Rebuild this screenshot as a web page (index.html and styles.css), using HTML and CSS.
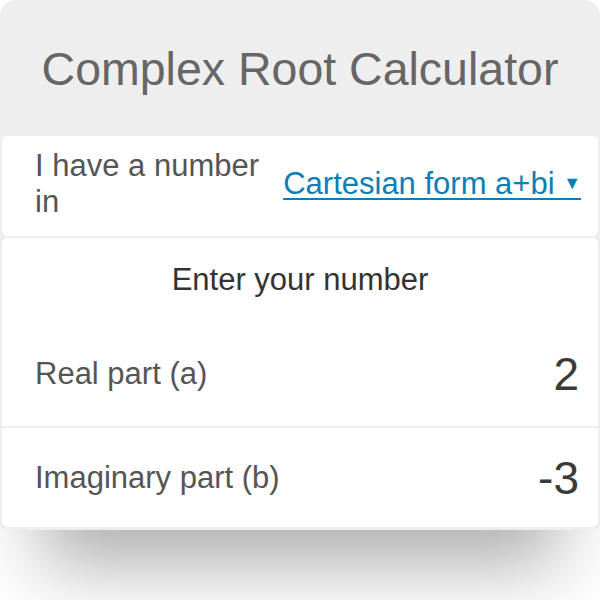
FILE: index.html
```html
<!DOCTYPE html>
<html lang="en">
<head>
    <meta charset="UTF-8">
    <meta name="viewport" content="width=device-width, initial-scale=1.0">
    <title>Complex Root Calculator</title>
    <link rel="stylesheet" href="styles.css">
</head>
<body>
    <div class="page">
        <div class="calculator">
            <h1 class="calculator-title">Complex Root Calculator</h1>

            <div class="calculator-card">
                <div class="form-row form-row-select">
                    <label class="form-label" for="number-form">I have a number in</label>
                    <span id="number-form" class="form-select">Cartesian form a+bi&nbsp;<span class="caret">&#9660;</span></span>
                </div>
            </div>

            <div class="calculator-card">
                <div class="section-title">Enter your number</div>
                <div class="form-row">
                    <label class="form-label" for="real-part">Real part (a)</label>
                    <span id="real-part" class="form-value">2</span>
                </div>
                <div class="form-row">
                    <label class="form-label" for="imag-part">Imaginary part (b)</label>
                    <span id="imag-part" class="form-value">-3</span>
                </div>
            </div>
        </div>
    </div>
</body>
</html>
```

FILE: styles.css
```css
body, html {
    margin: 0;
    padding: 0;
    background: #ffffff;
    font-family: "Liberation Sans", Arial, sans-serif;
}
.page {
    min-height: 600px;
    width: 600px;
}
.calculator {
    position: relative;
    width: 600px;
    box-sizing: border-box;
    background: #eeeeee;
    border-radius: 16px 16px 6px 6px;
    padding: 0 2px 3px;
    box-shadow: 0 75px 70px -40px rgba(0, 0, 0, 0.32);
}
.calculator-title {
    margin: 0;
    height: 136px;
    display: flex;
    align-items: center;
    justify-content: center;
    font-size: 46.5px;
    font-weight: normal;
    color: #666666;
    padding-top: 2px;
    box-sizing: border-box;
}
.calculator-card {
    background: #ffffff;
    border-radius: 6px;
}
.calculator-card + .calculator-card {
    margin-top: 2px;
}
.form-row {
    display: flex;
    align-items: center;
    justify-content: space-between;
    height: 104px;
    padding: 0 19px 0 33px;
    font-size: 31px;
}
.form-row + .form-row {
    border-top: 2px solid #eeeeee;
    height: 99px;
}
.form-row-select {
    height: 100px;
    padding-right: 17px;
    padding-bottom: 4px;
    box-sizing: border-box;
}
.form-label {
    color: #555555;
    line-height: 36px;
}
.form-row-select .form-label {
    width: 235px;
}
.form-select {
    color: #0a7fb5;
    text-decoration: underline;
    text-decoration-thickness: 2px;
    text-underline-offset: 4px;
    cursor: pointer;
}
.caret {
    font-size: 18px;
    vertical-align: 5px;
}
.section-title {
    height: 84px;
    display: flex;
    align-items: center;
    justify-content: center;
    font-size: 31px;
    color: #333333;
}
.form-value {
    font-size: 46px;
    color: #3a3a3a;
}
```
